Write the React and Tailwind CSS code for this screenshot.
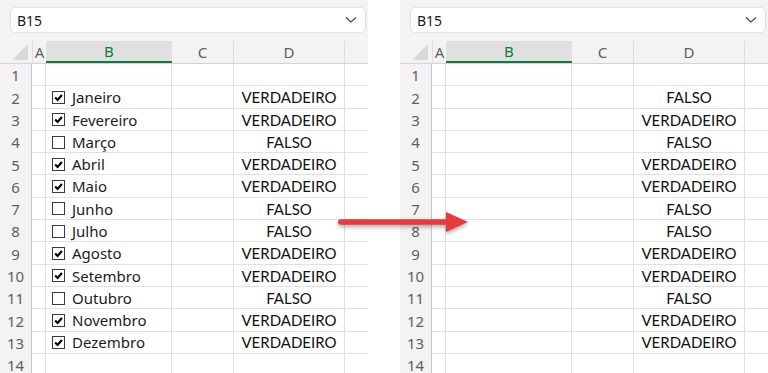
const LEFT = [
  ['Janeiro', true],
  ['Fevereiro', true],
  ['Março', false],
  ['Abril', true],
  ['Maio', true],
  ['Junho', false],
  ['Julho', false],
  ['Agosto', true],
  ['Setembro', true],
  ['Outubro', false],
  ['Novembro', true],
  ['Dezembro', true],
];

const RIGHT = [false, true, false, true, true, false, false, true, true, false, true, true];

const ui = { fontFamily: '"Noto Sans", "Open Sans", sans-serif' };
const cellFont = { fontFamily: 'Lato, "Liberation Sans", sans-serif' };

function Check({ on }) {
  return (
    <span className="w-[13px] h-[13px] border border-[#3a3a3a] bg-white flex items-center justify-center shrink-0">
      {on && (
        <svg viewBox="0 0 10 10" className="w-[9px] h-[9px]">
          <path d="M1.3 5 L4 7.8 L8.8 2.2" fill="none" stroke="#000" strokeWidth="2.4" />
        </svg>
      )}
    </span>
  );
}

function Sheet({ rows }) {
  return (
    <div className="w-[368px] h-full bg-[#f3f3f3] flex flex-col">
      <div className="pt-[7px] pl-[10px] pr-[2px]">
        <div className="h-[26px] bg-white border border-[#e3e3e3] rounded-[5px] flex items-center justify-between pl-[6px] pr-[8px] text-[14px] text-[#1b1b1b]" style={ui}>
          <span>B15</span>
          <svg viewBox="0 0 12 8" className="w-[12px] h-[8px]">
            <path d="M1 1.5 L6 6 L11 1.5" fill="none" stroke="#444" strokeWidth="1.2" />
          </svg>
        </div>
      </div>
      <div className="mt-[8px] h-[23px] flex text-[15px] text-[#5f5f5f] border-b border-[#d4d4d4]" style={ui}>
        <div className="w-[32px] flex items-end justify-end pr-[4px] pb-[3px]">
          <svg viewBox="0 0 16 16" className="w-[16px] h-[16px]">
            <path d="M16 0 L16 16 L0 16 Z" fill="#d9d9d9" />
          </svg>
        </div>
        <div className="w-[14px] flex items-center justify-center border-l border-[#dcdcdc]">A</div>
        <div className="w-[126px] flex items-center justify-center bg-[#e0e0e0] border-b-2 border-[#107c41] text-[#107c41]">B</div>
        <div className="w-[62px] flex items-center justify-center border-r border-[#dcdcdc]">C</div>
        <div className="w-[111px] flex items-center justify-center border-r border-[#dcdcdc]">D</div>
        <div className="flex-1" />
      </div>
      <div className="flex-1 overflow-hidden">
        {Array.from({ length: 14 }, (_, i) => {
          const r = i - 1;
          const row = r >= 0 && r < rows.length ? rows[r] : null;
          return (
            <div key={i} className="h-[22.3px] flex">
              <div className="w-[32px] flex items-center justify-center pt-[1px] text-[15px] text-[#5f5f5f] border-r border-[#c8c8c8]" style={ui}>
                {i + 1}
              </div>
              <div className="flex-1 flex bg-white border-b border-[#e1e1e1]">
                <div className="w-[14px] border-r border-[#e1e1e1]" />
                <div className="w-[126px] border-r border-[#e1e1e1] flex items-center gap-[7px] pl-[6px] pt-[1px]">
                  {row && row.label && (
                    <>
                      <Check on={row.check} />
                      <span className="text-[15px] text-[#1b1b1b]" style={ui}>{row.label}</span>
                    </>
                  )}
                </div>
                <div className="w-[62px] border-r border-[#e1e1e1]" />
                <div className="w-[111px] border-r border-[#e1e1e1] flex items-center justify-center pt-[1px] text-[15px] text-[#111]" style={cellFont}>
                  {row ? (row.value ? 'VERDADEIRO' : 'FALSO') : ''}
                </div>
                <div className="flex-1" />
              </div>
            </div>
          );
        })}
      </div>
    </div>
  );
}

export default function App() {
  const left = LEFT.map(([label, check]) => ({ label, check, value: check }));
  const right = RIGHT.map((value) => ({ value }));
  return (
    <div className="relative w-[768px] h-[373px] bg-white flex gap-[32px] overflow-hidden">
      <Sheet rows={left} />
      <Sheet rows={right} />
      <svg viewBox="0 0 140 32" className="absolute left-[334px] top-[206px] w-[140px] h-[32px] drop-shadow-[0_2px_2px_rgba(0,0,0,0.35)]">
        <rect x="4" y="13.2" width="112" height="5.6" rx="2.8" fill="#e8393d" />
        <path d="M112 6 L134 16 L112 26 Z" fill="#e8393d" />
      </svg>
    </div>
  );
}
